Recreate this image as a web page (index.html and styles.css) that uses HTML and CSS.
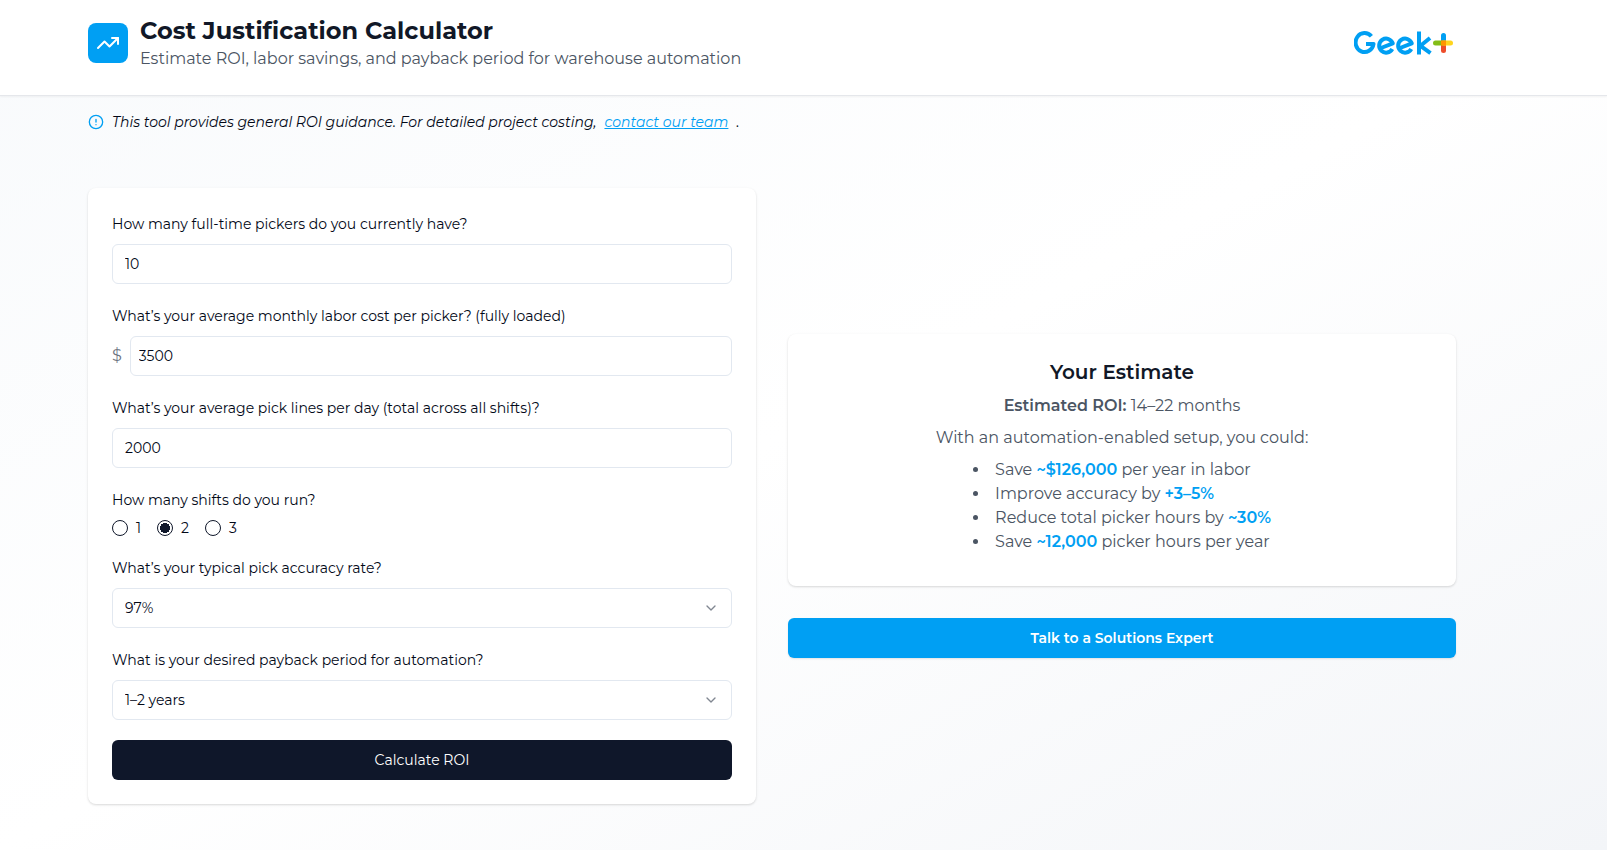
FILE: index.html
```
<!DOCTYPE html>
<html lang="en">

<head>
    <meta charset="UTF-8" />
    <meta name="viewport" content="width=device-width, initial-scale=1.0" />
    <title>Cost Justification Calculator</title>
    <link rel="stylesheet" href="styles.css">
</head>

<body>
    <header class="header">
        <div class="container header-inner">
            <div class="brand">
                <div class="brand-icon">
                    <svg width="24" height="24" viewBox="0 0 24 24" fill="none" stroke="currentColor" stroke-width="2" stroke-linecap="round" stroke-linejoin="round">
                        <polyline points="22 7 13.5 15.5 8.5 10.5 2 17" />
                        <polyline points="16 7 22 7 22 13" />
                    </svg>
                </div>
                <div>
                    <h1>Cost Justification Calculator</h1>
                    <p>Estimate ROI, labor savings, and payback period for warehouse automation</p>
                </div>
            </div>
            <svg class="logo" width="102" height="26" viewBox="0 0 102 26" role="img" aria-label="Geek+" fill="none" stroke="#009ff3" stroke-width="4" stroke-linejoin="round">
                <path d="M17.4 6.3A9 9.500 0 1 0 19.500 14H12" />
                <path d="M27 18L38.800 13.400A7 7 0 1 0 38.300 19" />
                <path d="M46 18L57.800 13.400A7 7 0 1 0 57.300 19" />
                <path d="M65 1.500V24.500M76 8L66.500 15.800L76.500 23.200" />
                <g stroke="none">
                    <rect x="87" y="3" width="5" height="12" rx="2.500" fill="#009ff3" />
                    <rect x="87" y="11" width="5" height="12" rx="2.500" fill="#ee4d2b" />
                    <rect x="79" y="10.500" width="12" height="5" rx="2.500" fill="#84bd17" />
                    <rect x="87" y="10.500" width="12" height="5" rx="2.500" fill="#ffd51e" />
                    <rect x="87" y="10.500" width="5" height="5" fill="#ff9500" />
                </g>
            </svg>
        </div>
    </header>

    <main class="container">
        <div class="notice">
            <svg width="16" height="16" viewBox="0 0 24 24" fill="none" stroke="currentColor" stroke-width="2" stroke-linecap="round">
                <circle cx="12" cy="12" r="10" />
                <path d="M12 8v4M12 16h.01" />
            </svg>
            <span>This tool provides general ROI guidance. For detailed project costing,</span>
            <a href="#">contact our team</a>
            <span>.</span>
        </div>

        <div class="columns">
            <form class="card form">
                <div class="field">
                    <label for="pickers">How many full-time pickers do you currently have?</label>
                    <input class="control" id="pickers" type="text" value="10">
                </div>
                <div class="field">
                    <label for="cost">What’s your average monthly labor cost per picker? (fully loaded)</label>
                    <div class="money">
                        <span>$</span>
                        <input class="control" id="cost" type="text" value="3500">
                    </div>
                </div>
                <div class="field">
                    <label for="lines">What’s your average pick lines per day (total across all shifts)?</label>
                    <input class="control" id="lines" type="text" value="2000">
                </div>
                <fieldset class="field">
                    <legend>How many shifts do you run?</legend>
                    <div class="radios">
                        <label><input type="radio" name="shifts" value="1">1</label>
                        <label><input type="radio" name="shifts" value="2" checked>2</label>
                        <label><input type="radio" name="shifts" value="3">3</label>
                    </div>
                </fieldset>
                <div class="field">
                    <label for="accuracy">What’s your typical pick accuracy rate?</label>
                    <div class="select">
                        <select class="control" id="accuracy">
                            <option>97%</option>
                        </select>
                        <svg width="16" height="16" viewBox="0 0 24 24" fill="none" stroke="currentColor" stroke-width="2" stroke-linecap="round" stroke-linejoin="round">
                            <path d="m6 9 6 6 6-6" />
                        </svg>
                    </div>
                </div>
                <div class="field">
                    <label for="payback">What is your desired payback period for automation?</label>
                    <div class="select">
                        <select class="control" id="payback">
                            <option>1–2 years</option>
                        </select>
                        <svg width="16" height="16" viewBox="0 0 24 24" fill="none" stroke="currentColor" stroke-width="2" stroke-linecap="round" stroke-linejoin="round">
                            <path d="m6 9 6 6 6-6" />
                        </svg>
                    </div>
                </div>
                <button class="btn btn-dark" type="button">Calculate ROI</button>
            </form>

            <div class="results">
                <section class="card estimate">
                    <h2>Your Estimate</h2>
                    <p><strong>Estimated ROI:</strong> 14–22 months</p>
                    <p>With an automation-enabled setup, you could:</p>
                    <ul>
                        <li>Save <b>~$126,000</b> per year in labor</li>
                        <li>Improve accuracy by <b>+3–5%</b></li>
                        <li>Reduce total picker hours by <b>~30%</b></li>
                        <li>Save <b>~12,000</b> picker hours per year</li>
                    </ul>
                </section>
                <button class="btn btn-blue" type="button">Talk to a Solutions Expert</button>
            </div>
        </div>
    </main>
</body>

</html>
```
FILE: styles.css
```
* {
    box-sizing: border-box;
    margin: 0;
    padding: 0;
}

body {
    font-family: Montserrat, Inter, sans-serif;
    font-size: 16px;
    line-height: 24px;
    color: #020817;
    min-height: 100vh;
    background: linear-gradient(to bottom right, #f8fafc, #fff 50%, #f3f5f8);
}

.container {
    max-width: 1400px;
    margin-left: 72px;
    padding: 0 16px;
}

.header {
    background: #fff;
    border-bottom: 1px solid #e5e7eb;
    box-shadow: 0 1px 2px rgba(0, 0, 0, 0.05);
}

.header-inner {
    display: flex;
    justify-content: space-between;
    align-items: center;
    padding-top: 15px;
    padding-bottom: 24px;
}

.brand {
    display: flex;
    align-items: center;
    gap: 12px;
}

.brand-icon {
    display: flex;
    padding: 8px;
    border-radius: 8px;
    background: #009ff3;
    color: #fff;
}

.brand h1 {
    font-size: 24px;
    line-height: 32px;
    font-weight: 700;
    color: #111827;
}

.brand p {
    color: #4b5563;
}

.notice {
    display: flex;
    align-items: center;
    gap: 8px;
    padding: 14px 0 54px;
    font-size: 14px;
    font-style: italic;
}

.notice svg,
.notice a {
    color: #009ff3;
}

.columns {
    display: grid;
    grid-template-columns: 1fr 1fr;
    gap: 32px;
    align-items: center;
    padding-bottom: 46px;
}

.card {
    background: #fff;
    border-radius: 8px;
    padding: 24px;
    box-shadow: 0 1px 3px rgba(0, 0, 0, 0.1), 0 1px 2px rgba(0, 0, 0, 0.06);
}

.form {
    display: flex;
    flex-direction: column;
    gap: 20px;
    font-size: 14px;
}

.field {
    display: flex;
    flex-direction: column;
    gap: 8px;
    border: 0;
}

.field legend {
    margin-bottom: 8px;
}

.control {
    width: 100%;
    height: 40px;
    padding: 0 12px;
    border: 1px solid #e2e8f0;
    border-radius: 6px;
    background: #fff;
    color: inherit;
    font-family: inherit;
    font-size: 14px;
    appearance: none;
}

.money {
    display: flex;
    align-items: center;
    gap: 8px;
}

.money span {
    color: #6b7280;
    font-size: 16px;
}

.money .control {
    padding: 0 8px;
}

.radios {
    display: flex;
    gap: 16px;
    line-height: 16px;
}

.radios label {
    display: flex;
    align-items: center;
    gap: 8px;
}

.radios input {
    width: 16px;
    height: 16px;
    border: 1px solid #0f172a;
    border-radius: 50%;
    appearance: none;
}

.radios input:checked {
    background: radial-gradient(circle, #0f172a 5px, transparent 5px);
}

.select {
    position: relative;
}

.select svg {
    position: absolute;
    top: 12px;
    right: 13px;
    color: #818791;
    pointer-events: none;
}

.btn {
    height: 40px;
    border: 0;
    border-radius: 6px;
    color: #fff;
    font-family: inherit;
    font-size: 14px;
    cursor: pointer;
}

.btn-dark {
    background: #0f172a;
}

.btn-blue {
    background: #009ff3;
    font-weight: 600;
    box-shadow: 0 1px 2px rgba(0, 0, 0, 0.1);
}

.results {
    display: flex;
    flex-direction: column;
    gap: 32px;
}

.estimate {
    display: flex;
    flex-direction: column;
    align-items: center;
    gap: 8px;
    padding-bottom: 32px;
    color: #4b5563;
}

.estimate h2 {
    font-size: 20px;
    line-height: 28px;
    font-weight: 600;
    color: #111827;
}

.estimate strong,
.estimate b {
    font-weight: 600;
}

.estimate b {
    color: #009ff3;
}

.estimate ul {
    list-style-position: inside;
}
```
